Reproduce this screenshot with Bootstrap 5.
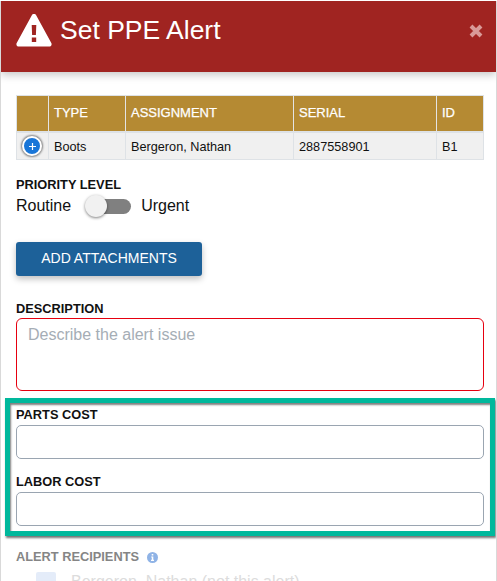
<!DOCTYPE html>
<html lang="en"><head><meta charset="utf-8">
<link href="https://cdn.jsdelivr.net/npm/bootstrap@5.3.0/dist/css/bootstrap.min.css" rel="stylesheet">
<style>
html,body{height:581px;overflow:hidden;background:#fff}
body{font-family:"Liberation Sans",Arial,sans-serif;color:#111;padding-top:1px}
.shell{height:580px;overflow:hidden;border-left:1px solid #d9d9d9;border-right:1px solid #d9d9d9}
.hdr{height:71px;background:#a02421;color:#fff;box-shadow:0 3px 8px rgba(0,0,0,.22);padding:0 13px 12px 15px}
.hdr h1{font-size:26.5px;font-weight:400;margin:0 0 0 8px;line-height:1}
.closer{margin-left:auto;line-height:0}
.bodywrap{padding:23px 12px 0 15px}
.ppe{width:468px;font-size:12.7px;border-collapse:separate;border-spacing:0;border:1px solid #dee2e6;table-layout:fixed;margin:0}
.ppe th{background:#b58a33;color:#fff;font-weight:400;font-size:13px;-webkit-text-stroke:.25px #fff;height:37px;padding:0 5px 2px;border-left:1px solid #e4e4e4;border-bottom:2px solid #dee2e6}
.ppe td{background:#f0f0f0;height:26px;padding:3px 5px 0;border-left:1px solid #dee2e6;vertical-align:middle}
.ppe th:first-child,.ppe td:first-child{border-left:0;padding:0 0 0 5px}
.plus{width:20px;height:20px;border-radius:50%;background:#1976d8;border:2px solid #fff;box-shadow:0 0 2px 1px rgba(0,0,0,.45);color:#fff}
.lbl{font-size:12.8px;font-weight:700;line-height:14px;margin:0;color:#111}
.prio{font-size:16px;line-height:20px;margin-top:4px}
.trk{width:45px;height:15px;background:#808080;border-radius:8px;margin:0 10px 0 15px;position:relative}
.knob{position:absolute;left:-1px;top:-4px;width:22px;height:22px;border-radius:50%;background:#f1f1f1;box-shadow:0 1px 3px rgba(0,0,0,.5)}
.attach{display:block;width:186px;height:34px;margin-top:26px;padding:0 0 2px;background:#1d6199;border:0;border-radius:3px;color:#fff;font-size:14px;box-shadow:0 3px 6px rgba(0,0,0,.25)}
.ta{display:block;width:468px;height:73px;border:1px solid #e6000f;border-radius:6px;padding:4px 11px;font-size:16px;resize:none;outline:0;margin-top:2px}
.ta::placeholder{color:#a5adb5}
.cal{margin:7px 0 0 -11px;width:490px;height:138px;border:5px solid #00b89c;box-shadow:inset 1px 2px 2px rgba(0,0,0,.5),1px 2px 2px rgba(0,0,0,.55);padding:5px 6px 0}
.cost{display:block;width:468px;height:34px;border:1px solid #9aa5b1;border-radius:5px;outline:0;margin-top:3px}
.gap1{margin-top:16px}
.rcp{margin-top:14px}
.rcp .lbl{color:#858585}
.chk{width:20px;height:20px;background:#e4ecf9;border-radius:2px;margin-left:20px;flex:none}
.who{font-size:16px;line-height:20px;color:#dcdcdc;margin-left:15px;white-space:nowrap}
.rowlast{margin-top:8px}
</style></head><body>
<div class="shell">
<header class="hdr d-flex align-items-center">
<svg width="36" height="33" viewBox="0 0 36 33" aria-hidden="true"><path fill="#fff" fill-rule="evenodd" d="M18 0c1 0 1.800.5 2.300 1.400l15 27.600c.9 1.700-.3 3.500-2.200 3.500H2.900C1 32.500-.2 30.700.7 29L15.700 1.400C16.200.5 17 0 18 0zM15.700 11l.4 10h3.800l.4-10zM15.800 23.500V28h4.400v-4.500z"/></svg>
<h1>Set PPE Alert</h1>
<span class="closer"><svg width="14" height="14" viewBox="0 0 14 14" aria-hidden="true"><path d="M2 2l10 10M12 2L2 12" stroke="#d99a98" stroke-width="4"/></svg></span>
</header>
<div class="bodywrap">
<table class="ppe"><colgroup><col style="width:31px"><col style="width:77px"><col style="width:168px"><col style="width:143px"><col></colgroup>
<thead><tr><th></th><th>TYPE</th><th>ASSIGNMENT</th><th>SERIAL</th><th>ID</th></tr></thead>
<tbody><tr><td><div class="plus d-flex align-items-center justify-content-center"><svg width="9" height="9" viewBox="0 0 9 9" aria-hidden="true"><path d="M4.500 1v7M1 4.500h7" stroke="#fff" stroke-width="1.200"/></svg></div></td><td>Boots</td><td>Bergeron, Nathan</td><td>2887558901</td><td>B1</td></tr></tbody></table>
<p class="lbl" style="margin-top:18px">PRIORITY LEVEL</p>
<div class="prio d-flex align-items-center"><span>Routine</span><span class="trk"><span class="knob"></span></span><span>Urgent</span></div>
<button class="attach" type="button">ADD ATTACHMENTS</button>
<p class="lbl" style="margin-top:26px">DESCRIPTION</p>
<textarea class="ta" placeholder="Describe the alert issue"></textarea>
<section class="cal">
<p class="lbl">PARTS COST</p><input class="cost" type="text" aria-label="Parts cost">
<p class="lbl gap1">LABOR COST</p><input class="cost" type="text" aria-label="Labor cost">
</section>
<div class="rcp d-flex align-items-center"><span class="lbl">ALERT RECIPIENTS</span><svg class="ms-2" width="11" height="11" viewBox="0 0 11 11" aria-hidden="true"><circle cx="5.500" cy="5.500" r="5.500" fill="#8fb3e6"/><path d="M4.700 2h1.600v1.500H4.700zM4.200 4.500h2.100v3.300h.7V9H4V7.800h.8V5.600h-.6z" fill="#fff"/></svg></div>
<div class="d-flex align-items-start rowlast"><span class="chk"></span><span class="who">Bergeron, Nathan (not this alert)</span></div>
</div>
</div>
</body></html>
